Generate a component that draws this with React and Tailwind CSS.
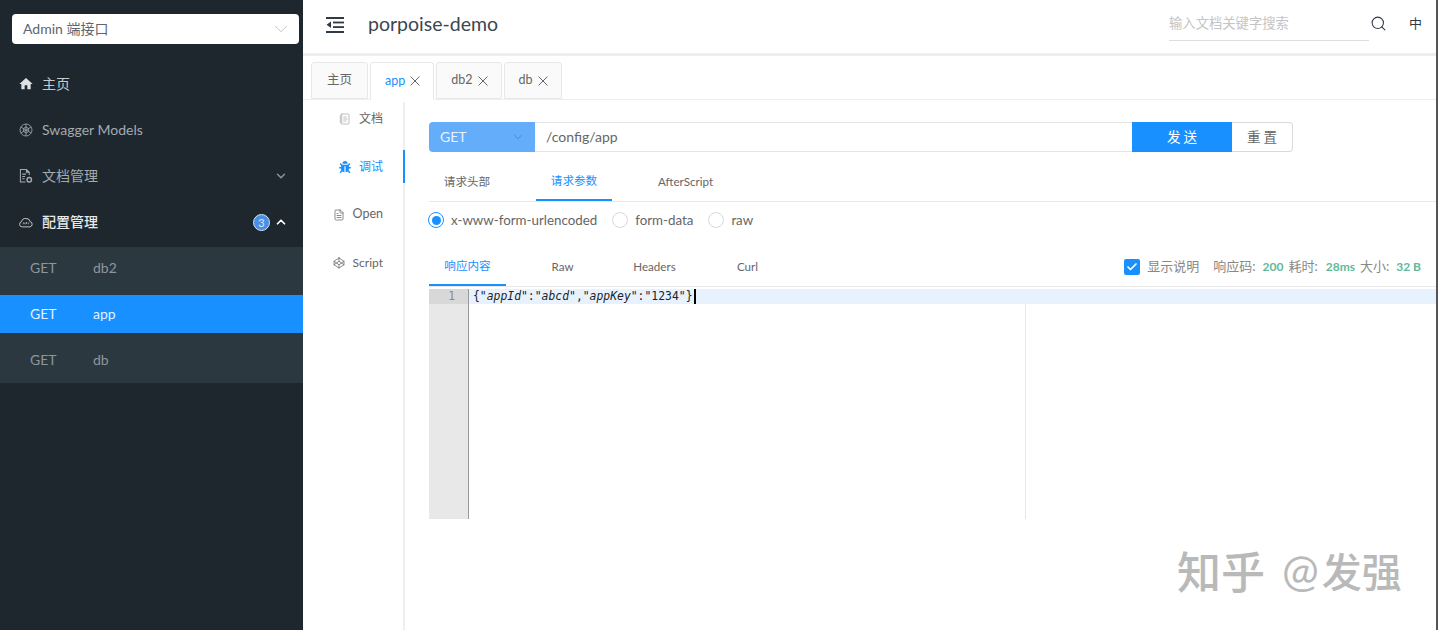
import React from 'react';
import { ChevronDown, ChevronUp, Search, Check, FileText, Codepen, NotebookText } from 'lucide-react';
import { FaBug } from 'react-icons/fa';
import { MdHome } from 'react-icons/md';

function MenuIndent() {
  return (
    <svg width="18" height="16" viewBox="0 0 18 16" fill="#2f3a44" className="-mt-[3px]">
      <rect x="0" y="0" width="18" height="2" />
      <rect x="7" y="4.6" width="11" height="1.8" />
      <rect x="7" y="9.2" width="11" height="1.8" />
      <rect x="0" y="14" width="18" height="2" />
      <path d="M5 4.5v6.500L0.500 7.700z" />
    </svg>
  );
}

function ModelIcon() {
  return (
    <svg width="14" height="14" viewBox="0 0 14 14" fill="none" stroke="#8b949b" strokeWidth="1">
      <circle cx="7" cy="7" r="6" />
      <path d="M7 1v12M1.800 4l10.400 6M12.200 4L1.800 10M7 4l2.600 1.500v3L7 10 4.400 8.500v-3z" />
    </svg>
  );
}

function DocGearIcon() {
  return (
    <svg width="15" height="16" viewBox="0 0 15 16" fill="none" stroke="#a3aab0" strokeWidth="1.100">
      <path d="M7 14.500H1.500V1h6.500l3 3v3" />
      <path d="M8 1v3h3" fill="#a3aab0" />
      <path d="M3.500 6h4M3.500 8.500h3M3.500 11h2.500" />
      <circle cx="11" cy="12" r="2.400" strokeWidth="1.500" />
    </svg>
  );
}

function CloudIcon() {
  return (
    <svg width="16" height="13" viewBox="0 0 16 13" fill="none" stroke="#d5d8da" strokeWidth="1">
      <path d="M4 11.500H3.500a3 3 0 0 1-.6-5.900A4.600 4.600 0 0 1 8 2a4 4 0 0 1 4.500 3.400A3.100 3.100 0 0 1 12.500 11.500z" />
      <path d="M4.500 8.500l1-2 1 2M8 8.500v-2h1v1H8M11 6.500v2" strokeWidth="0.700" />
    </svg>
  );
}

function CloseIcon() {
  return (
    <svg width="10" height="10" viewBox="0 0 10 10" stroke="#666666" strokeWidth="1" className="shrink-0">
      <path d="M0.500 0.500l9 9M9.500 0.500l-9 9" />
    </svg>
  );
}

function NavRow({ icon, label, right, active }) {
  return (
    <div className={`h-[46px] pl-[19px] pr-[15px] flex items-center gap-[9px] text-sm ${active ? 'text-[#e6e8e9]' : 'text-[#a3aab0]'}`}>
      <span className="w-[14px] flex justify-center shrink-0">{icon}</span>
      <span className="flex-1">{label}</span>
      {right}
    </div>
  );
}

function SubRow({ name, active }) {
  return (
    <div className={`flex items-center pl-[30px] text-sm ${active ? 'h-[38px] my-[6px] bg-[#1890ff] text-[#e4f2ff]' : 'h-[42px] text-[#8d969c]'}`}>
      <span className="w-[63px]">GET</span>
      <span>{name}</span>
    </div>
  );
}

function Sidebar() {
  return (
    <aside className="w-[303px] shrink-0 bg-[#1f272e] flex flex-col">
      <div className="pl-3 pr-1 pt-[14px] pb-[17px]">
        <div className="h-[30px] bg-white rounded-[4px] flex items-center justify-between pl-[11px] pr-[7px] text-sm text-[#5c6670]">
          <span className="-mt-[1px]">Admin 端接口</span>
          <ChevronDown size={22} strokeWidth={0.8} className="text-[#a8adb1]" />
        </div>
      </div>
      <NavRow icon={<MdHome size={16} className="text-[#dfe2e4] shrink-0" />} label={<span className="text-[#c6cbce]">主页</span>} />
      <NavRow icon={<ModelIcon />} label="Swagger Models" />
      <NavRow icon={<DocGearIcon />} label="文档管理" right={<ChevronDown size={14} strokeWidth={2.5} className="text-[#8b949b]" />} />
      <NavRow
        active
        icon={<CloudIcon />}
        label={<span className="font-medium">配置管理</span>}
        right={
          <span className="flex items-center gap-[4px]">
            <span className="w-[17px] h-[17px] rounded-full bg-[#4a90e2] border border-[#cfe3f8] text-[11px] leading-none text-[#d8e8f8] flex items-center justify-center">3</span>
            <ChevronUp size={14} strokeWidth={3} className="text-white" />
          </span>
        }
      />
      <div className="mt-[2px] bg-[#2c3840] h-[136px]">
        <SubRow name="db2" />
        <SubRow name="app" active />
        <SubRow name="db" />
      </div>
    </aside>
  );
}

function Header() {
  return (
    <header className="h-[56px] shrink-0 border-b-[3px] border-[#eeeeee] flex items-center pl-[23px] pr-[14px]">
      <MenuIndent />
      <span className="ml-[24px] -mt-[5px] text-[19.5px] text-[#3c4650]">porpoise-demo</span>
      <div className="ml-auto self-start mt-[8px] w-[200px] h-[33px] border-b border-[#dddddd] flex items-center text-[13.33px] text-[#c4c4c4]">
        输入文档关键字搜索
      </div>
      <Search size={17} strokeWidth={1.5} className="ml-[1px] -mt-[7px] text-[#2f3a44]" />
      <span className="ml-[22px] -mt-[5px] text-[13px] text-[#2f3a44]">中</span>
    </header>
  );
}

function PageTab({ label, active, closable }) {
  return (
    <div className={`flex items-center gap-[5px] text-[12.5px] rounded-t-[3px] border border-[#e8e8e8] ${closable ? 'pl-[14px] pr-[13px]' : 'px-[15px]'} ${active ? 'h-[38px] bg-white border-b-white text-[#1890ff]' : 'h-[37px] bg-[#fafafa] text-[#666666]'}`}>
      <span>{label}</span>
      {closable && <CloseIcon />}
    </div>
  );
}

function SideTab({ icon, label, active, size }) {
  return (
    <div className={`h-[33px] mb-[15px] flex items-center justify-end gap-[8px] pr-[20px] border-r-2 ${size} ${active ? 'border-[#1890ff] text-[#1890ff]' : 'border-transparent text-[#666666]'}`}>
      {icon}
      <span>{label}</span>
    </div>
  );
}

function UnderTab({ label, active, width }) {
  return (
    <div className={`h-[39px] flex items-center justify-center text-[11.6px] ${width} ${active ? 'text-[#1890ff] border-b-2 border-[#1890ff]' : 'text-[#666666]'}`}>
      {label}
    </div>
  );
}

function Radio({ label, checked }) {
  return (
    <span className="flex items-center gap-[7px] text-[13.33px] text-[#666666]">
      <span className={`w-4 h-4 rounded-full border flex items-center justify-center ${checked ? 'border-[#1890ff]' : 'border-[#d9d9d9]'}`}>
        {checked && <span className="w-[9px] h-[9px] rounded-full bg-[#1890ff]" />}
      </span>
      {label}
    </span>
  );
}

function Editor() {
  return (
    <div className="h-[230px] flex font-['DejaVu_Sans_Mono',monospace] text-[11.4px] leading-[15px]">
      <div className="w-[40px] shrink-0 bg-[#e8e8e8] border-r border-[#999999]">
        <div className="h-[15px] bg-[#d8d8d8] pr-[13px] text-right text-[#888888]">1</div>
      </div>
      <div className="flex-1 relative">
        <div className="h-[15px] bg-[#e8f2ff] pl-[4px] text-[#222222] flex items-center whitespace-pre">
          <span>{'{"'}<i>appId</i>{'":"'}<i>abcd</i>{'","'}<i>appKey</i>{'":"1234"}'}</span>
          <span className="w-[2px] h-[15px] ml-[1px] bg-black" />
        </div>
        <div className="absolute left-[556px] top-[15px] bottom-0 border-l border-[#e8e8e8]" />
      </div>
    </div>
  );
}

function Debug() {
  return (
    <div className="flex-1 min-w-0 pt-[22px] pl-[24px]">
      <div className="flex h-[30px] w-[864px]">
        <div className="w-[106px] bg-[#64adfb] rounded-l-[4px] flex items-center justify-between pl-[11px] pr-[10px] text-sm text-[#e8f3ff]">
          <span>GET</span>
          <ChevronDown size={14} strokeWidth={1.2} className="text-[#3b7fc4]" />
        </div>
        <div className="flex-1 border-y border-[#e4e4e4] flex items-center pl-[11px] text-sm text-[#666666]">/config/app</div>
        <div className="w-[100px] pl-[3px] bg-[#1890ff] text-white text-[13.5px] flex items-center justify-center tracking-[3px]">发送</div>
        <div className="w-[61px] pl-[3px] border border-l-0 border-[#d9d9d9] rounded-r-[4px] text-[13.5px] text-[#666666] flex items-center justify-center tracking-[3px]">重置</div>
      </div>

      <div className="mt-[10px] flex border-b border-[#e8e8e8]">
        <UnderTab label="请求头部" width="w-[76px]" />
        <UnderTab label="请求参数" width="w-[76px] ml-[31px]" active />
        <UnderTab label="AfterScript" width="w-[85px] ml-[31px]" />
      </div>

      <div className="h-[37px] flex items-center gap-[15px] -ml-[1px]">
        <Radio label="x-www-form-urlencoded" checked />
        <Radio label="form-data" />
        <Radio label="raw" />
      </div>

      <div className="mt-[8px] flex items-center border-b border-[#e8e8e8]">
        <UnderTab label="响应内容" width="w-[77px]" active />
        <UnderTab label="Raw" width="w-[77px] ml-[18px]" />
        <UnderTab label="Headers" width="w-[77px] ml-[15px]" />
        <UnderTab label="Curl" width="w-[77px] ml-[16px]" />
        <div className="ml-auto pr-[15px] flex items-center text-[13px] text-[#888888]">
          <span className="w-4 h-4 rounded-[2px] bg-[#1890ff] flex items-center justify-center mr-[7px]">
            <Check size={12} strokeWidth={3.5} className="text-white" />
          </span>
          <span>显示说明</span>
          <span className="ml-[14px]">响应码:</span>
          <span className="ml-[7px] text-xs font-bold text-[#5fb998]">200</span>
          <span className="ml-[5px]">耗时:</span>
          <span className="ml-[8px] text-xs font-bold text-[#5fb998]">28ms</span>
          <span className="ml-[5px]">大小:</span>
          <span className="ml-[7px] text-xs font-bold text-[#5fb998]">32 B</span>
        </div>
      </div>
      <div className="mt-[2px]">
        <Editor />
      </div>
    </div>
  );
}

export default function App() {
  return (
    <div className="relative w-[1440px] h-[630px] overflow-hidden flex bg-white font-['Lato','Noto_Sans_CJK_SC',sans-serif]">
      <Sidebar />
      <main className="flex-1 min-w-0 mr-[2px] flex flex-col border-r-2 border-[#555555]">
        <Header />
        <div className="h-[44px] shrink-0 pl-[8px] pt-[6px] flex items-start gap-[2px] border-b border-[#eeeeee]">
          <PageTab label="主页" />
          <PageTab label="app" active closable />
          <PageTab label="db2" closable />
          <PageTab label="db" closable />
        </div>
        <div className="flex-1 flex min-h-0">
          <div className="w-[102px] shrink-0 mt-[2px] border-r-2 border-[#eeeeee]">
            <div className="-mr-[2px]">
              <SideTab size="text-xs" icon={<NotebookText size={12} strokeWidth={1.5} className="text-[#aaaaaa]" />} label="文档" />
              <SideTab size="text-xs" active icon={<FaBug size={12} />} label="调试" />
              <SideTab size="text-[12.5px]" icon={<FileText size={12} strokeWidth={1.5} />} label="Open" />
              <SideTab size="text-xs" icon={<Codepen size={12} strokeWidth={1.5} />} label="Script" />
            </div>
          </div>
          <Debug />
        </div>
      </main>
      <div className="absolute left-[1177px] top-[540px] flex items-center leading-[60px] font-medium text-[#b9b9b9] font-['Noto_Sans_CJK_SC',sans-serif] whitespace-nowrap">
        <span className="text-[44px]">知乎</span>
        <span className="ml-[17px] text-[44px] font-normal font-['Lato',sans-serif]">@</span>
        <span className="ml-[3px] text-[40px]">发强</span>
      </div>
    </div>
  );
}
